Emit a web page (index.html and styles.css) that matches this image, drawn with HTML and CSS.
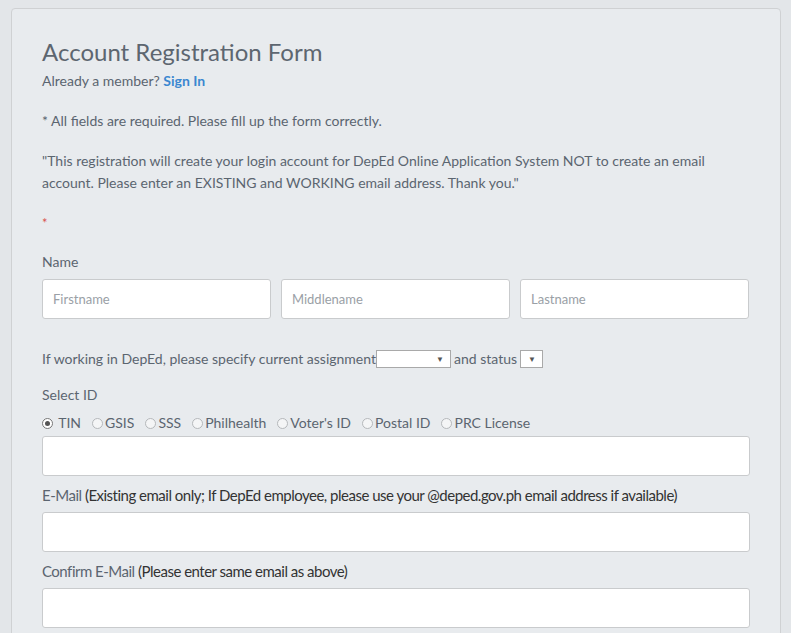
FILE: index.html
```html
<!DOCTYPE html>
<html lang="en">
<head>
	<meta charset="UTF-8">
	<title>Account Registration</title>
	<link rel="stylesheet" href="styles.css">
</head>
<body>
	<div class="reg-panel">
		<h1 class="reg-title">Account Registration Form</h1>
		<p class="reg-member">Already a member? <a href="#">Sign In</a></p>
		<p class="reg-note">* All fields are required. Please fill up the form correctly.</p>
		<p class="reg-note">"This registration will create your login account for DepEd Online Application System NOT to create an email account. Please enter an EXISTING and WORKING email address. Thank you."</p>
		<p class="reg-req">*</p>

		<label class="reg-label">Name</label>
		<div class="name-row">
			<input type="text" class="reg-input" placeholder="Firstname">
			<input type="text" class="reg-input" placeholder="Middlename">
			<input type="text" class="reg-input" placeholder="Lastname">
		</div>

		<div class="assign-row">
			If working in DepEd, please specify current assignment<span class="mini-select wide"><span class="caret">&#9660;</span></span>and status<span class="mini-select"><span class="caret">&#9660;</span></span>
		</div>

		<label class="reg-label sel">Select ID</label>
		<div class="id-row">
			<label class="id-opt"><span class="radio checked"></span>&nbsp;TIN</label>
			<label class="id-opt"><span class="radio"></span>GSIS</label>
			<label class="id-opt"><span class="radio"></span>SSS</label>
			<label class="id-opt"><span class="radio"></span>Philhealth</label>
			<label class="id-opt"><span class="radio"></span>Voter's ID</label>
			<label class="id-opt"><span class="radio"></span>Postal ID</label>
			<label class="id-opt"><span class="radio"></span>PRC License</label>
		</div>
		<input type="text" class="reg-input full">

		<label class="reg-label mail">E-Mail <span class="hint">(Existing email only; If DepEd employee, please use your @deped.gov.ph email address if available)</span></label>
		<input type="text" class="reg-input full">

		<label class="reg-label mail">Confirm E-Mail <span class="hint">(Please enter same email as above)</span></label>
		<input type="text" class="reg-input full">
	</div>
</body>
</html>
```

FILE: styles.css
```css
html,body{
	margin: 0;
	padding: 0;
	background: #e3e6e9;
	height: 100%;
	overflow: hidden;
}
body{
	padding: 8px 10px 0 11px;
	font-family: Lato, "Open Sans", sans-serif;
	font-size: 14px;
	color: #5b6570;
}
.reg-panel{
	background: #e8ebee;
	border: 1px solid #cfd1d3;
	border-radius: 4px;
	padding: 28px 30px 40px 30px;
	height: 700px;
}
.reg-title{
	font-size: 24px;
	font-weight: 400;
	color: #5d6670;
	margin: 0 0 4px 0;
	line-height: 30px;
}
.reg-member{
	margin: 0 0 19px 0;
	line-height: 20px;
}
.reg-member a{
	color: #3b87d0;
	font-weight: bold;
	text-decoration: none;
}
.reg-note{
	margin: 0 0 18px 0;
	line-height: 22px;
}
.reg-req{
	color: #d9534f;
	margin: 0 0 18px 0;
	line-height: 22px;
	font-size: 13px;
}
.reg-label{
	display: block;
	line-height: 20px;
	margin-bottom: 7px;
}
.reg-label.sel{
	margin-bottom: 9px;
}
.reg-label.mail{
	margin-bottom: 7px;
	font-size: 15px;
	letter-spacing: -0.5px;
}
.hint{
	color: #333;
}
.name-row{
	display: flex;
	gap: 10px;
	padding-right: 1px;
	margin-bottom: 30px;
}
.reg-input{
	display: block;
	box-sizing: border-box;
	height: 40px;
	border: 1px solid #c9cbcd;
	border-radius: 3px;
	background: #fff;
	padding: 0 10px;
	font-family: Lato, sans-serif;
	font-size: 13px;
	color: #555;
	min-width: 0;
	flex: 1;
}
.reg-input::placeholder{
	color: #9aa0a6;
}
.reg-input.full{
	width: 100%;
	margin: 4px 0 9px 0;
}
.assign-row{
	line-height: 20px;
	margin-bottom: 16px;
}
.mini-select{
	display: inline-block;
	vertical-align: middle;
	box-sizing: border-box;
	width: 23px;
	height: 18px;
	border: 1px solid #a9a9a9;
	background: #fff;
	position: relative;
	margin: -3px 3px 0 3px;
}
.mini-select.wide{
	width: 75px;
	margin-left: 0;
}
.caret{
	position: absolute;
	right: 6px;
	top: 3px;
	font-size: 8px;
	line-height: 10px;
	color: #555;
}
.id-row{
	display: flex;
	gap: 11px;
	line-height: 18px;
}
.id-opt{
	display: flex;
	align-items: center;
}
.radio{
	display: inline-block;
	box-sizing: border-box;
	width: 11px;
	height: 11px;
	border: 1px solid #b5b8bb;
	border-radius: 50%;
	background: #f4f5f6;
	margin-right: 2px;
	position: relative;
}
.radio.checked{
	border-color: #777;
	background: #fff;
}
.radio.checked:after{
	content: "";
	position: absolute;
	left: 2px;
	top: 2px;
	width: 5px;
	height: 5px;
	border-radius: 50%;
	background: #555;
}
```
